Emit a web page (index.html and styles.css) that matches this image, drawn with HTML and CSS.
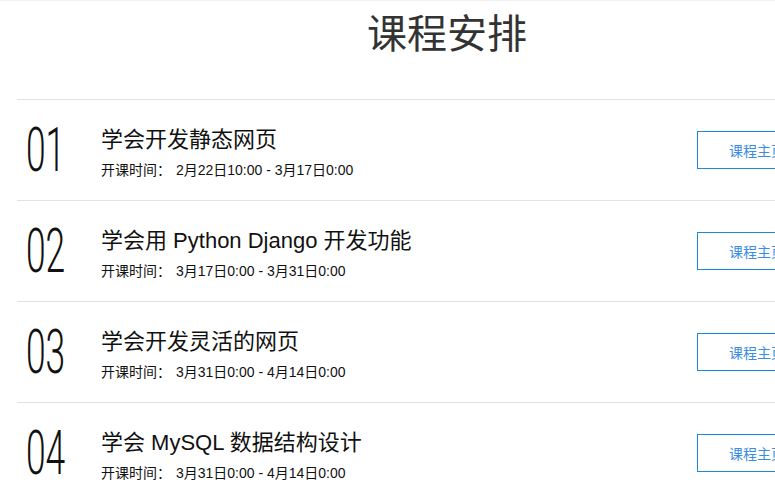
FILE: index.html
```html
<!DOCTYPE html>
<html lang="zh-CN">
<head>
<meta charset="utf-8">
<title>课程安排</title>
<link rel="stylesheet" href="styles.css">
</head>
<body>
<div class="topline"></div>
<div class="page">
  <h1 class="title">课程安排</h1>
  <ul class="list">
    <li class="row">
      <div class="num"><span>01</span></div>
      <div class="info">
        <div class="name">学会开发静态网页</div>
        <div class="time">开课时间： <span class="date">2月22日10:00 - 3月17日0:00</span></div>
      </div>
      <a class="btn" href="#">课程主页</a>
    </li>
    <li class="row">
      <div class="num"><span>02</span></div>
      <div class="info">
        <div class="name">学会用 Python Django 开发功能</div>
        <div class="time">开课时间： <span class="date">3月17日0:00 - 3月31日0:00</span></div>
      </div>
      <a class="btn" href="#">课程主页</a>
    </li>
    <li class="row">
      <div class="num"><span>03</span></div>
      <div class="info">
        <div class="name">学会开发灵活的网页</div>
        <div class="time">开课时间： <span class="date">3月31日0:00 - 4月14日0:00</span></div>
      </div>
      <a class="btn" href="#">课程主页</a>
    </li>
    <li class="row">
      <div class="num"><span>04</span></div>
      <div class="info">
        <div class="name">学会 MySQL 数据结构设计</div>
        <div class="time">开课时间： <span class="date">3月31日0:00 - 4月14日0:00</span></div>
      </div>
      <a class="btn" href="#">课程主页</a>
    </li>
  </ul>
</div>
</body>
</html>
```

FILE: styles.css
```css
html, body {
  margin: 0;
  padding: 0;
  overflow: hidden;
  background: #fff;
}
body {
  font-family: "Liberation Sans", "Noto Sans CJK SC", sans-serif;
  color: #111;
}
.topline {
  height: 1px;
  background: #f2f2f2;
}
.page {
  width: 860px;
  margin: 0 0 0 17px;
}
.title {
  margin: 0;
  height: 98px;
  padding-top: 6px;
  box-sizing: border-box;
  text-align: center;
  font-family: "Noto Sans CJK SC", sans-serif;
  font-weight: 400;
  font-size: 40px;
  line-height: 48px;
  color: #333;
}
.list {
  list-style: none;
  margin: 0;
  padding: 0;
}
.row {
  display: flex;
  align-items: center;
  height: 100px;
  border-top: 1px solid #e2e2e2;
}
.num {
  width: 84px;
  flex: none;
  padding-left: 9px;
  box-sizing: border-box;
  overflow: visible;
}
.num span {
  display: inline-block;
  font-family: Roboto, sans-serif;
  font-weight: 300;
  font-size: 62px;
  line-height: 62px;
  color: #111;
  transform: scaleX(0.57);
  transform-origin: left center;
}
.info {
  flex: 1;
  padding-top: 4px;
}
.name {
  font-size: 22px;
  line-height: 30px;
  color: #111;
}
.time {
  margin-top: 5px;
  font-size: 14px;
  line-height: 20px;
  color: #111;
}
.date {
  margin-left: 1px;
}
.btn {
  flex: none;
  width: 120px;
  height: 38px;
  box-sizing: border-box;
  border: 1px solid #1a8ae0;
  margin-right: 60px;
  margin-bottom: 1px;
  font-family: "Noto Sans CJK SC", sans-serif;
  font-size: 14px;
  line-height: 36px;
  text-align: center;
  color: #3a8de2;
  text-decoration: none;
}
```
